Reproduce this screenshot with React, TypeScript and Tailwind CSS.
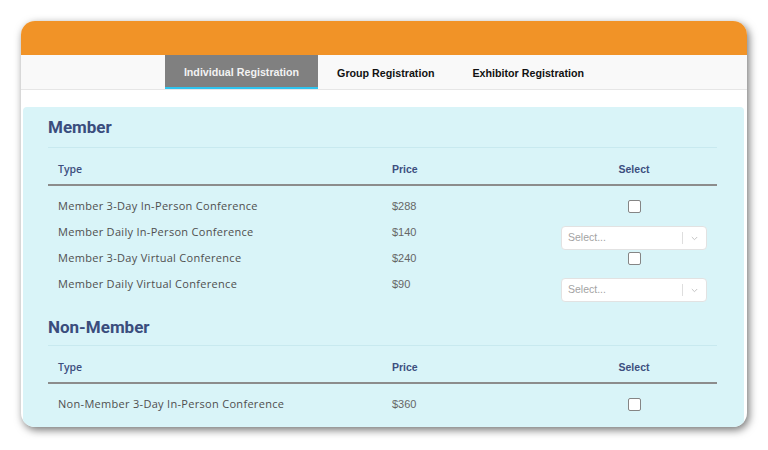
import React from "react"

type Row = { name: string; price: string; kind: "check" | "select" }

const memberRows: Row[] = [
  { name: "Member 3-Day In-Person Conference", price: "$288", kind: "check" },
  { name: "Member Daily In-Person Conference", price: "$140", kind: "select" },
  { name: "Member 3-Day Virtual Conference", price: "$240", kind: "check" },
  { name: "Member Daily Virtual Conference", price: "$90", kind: "select" },
]

const nonMemberRows: Row[] = [
  { name: "Non-Member 3-Day In-Person Conference", price: "$360", kind: "check" },
]

const arial = "font-['Liberation_Sans',Arial,sans-serif]"

function Checkbox() {
  return <span className="block h-[13px] w-[13px] rounded-[2px] border border-[#858585] bg-white" />
}

function SelectBox() {
  return (
    <div className={`mt-[12px] flex h-[24px] w-[146px] items-center rounded-[4px] border border-[#e2e2e2] bg-white ${arial}`}>
      <span className="flex-1 pl-[6px] text-[10.5px] text-[#a3a3a3]">Select...</span>
      <span className="h-[12px] w-px bg-[#dedede]" />
      <span className="flex w-[23px] justify-center">
        <svg width="7" height="5" viewBox="0 0 7 5" fill="none">
          <path d="M0.8 1l2.7 2.7L6.2 1" stroke="#c4c4c4" strokeWidth="1" />
        </svg>
      </span>
    </div>
  )
}

function Section({ title, rows, headPad }: { title: string; rows: Row[]; headPad: string }) {
  return (
    <section>
      <h2 className={`border-b border-[#c8e9ef] ${headPad} font-['Roboto',sans-serif] text-[17px] font-bold leading-[20px] text-[#3a4d7d]`}>
        {title}
      </h2>
      <div className="grid h-[38px] grid-cols-[344px_159px_1fr] items-end border-b-2 border-[#8c8c8c] pb-[8px] leading-[14px] text-[#3d4f7f]">
        <span className="pl-[10px] font-['Open_Sans',sans-serif] text-[10.5px] font-semibold">Type</span>
        <span className={`${arial} text-[10.5px] font-bold`}>Price</span>
        <span className={`${arial} text-center text-[10.5px] font-bold`}>Select</span>
      </div>
      <div className="pt-[7px]">
        {rows.map((r) => (
          <div key={r.name} className="grid h-[26px] grid-cols-[344px_159px_1fr] items-center">
            <span className="pl-[10px] pt-[1px] font-['Open_Sans',sans-serif] text-[11px] tracking-[0.3px] text-[#4f4f4f]">
              {r.name}
            </span>
            <span className={`${arial} pt-[1px] text-[11px] text-[#666]`}>{r.price}</span>
            <span className="flex h-[26px] items-center justify-center">
              {r.kind === "check" ? <Checkbox /> : <SelectBox />}
            </span>
          </div>
        ))}
      </div>
    </section>
  )
}

export default function App() {
  const tabs = ["Individual Registration", "Group Registration", "Exhibitor Registration"]
  return (
    <main className="h-[450px] w-[768px] bg-white pl-[21px] pt-[21px]">
      <div className="flex h-[406px] w-[726px] flex-col overflow-hidden rounded-[14px] bg-white shadow-[2px_3px_8px_rgba(0,0,0,0.55)]">
        <div className="h-[34px] shrink-0 bg-[#f19327]" />
        <nav className="flex h-[35px] shrink-0 justify-center border-b border-[#e6e6e6] bg-[#f9f9f9]">
          {tabs.map((t, i) => (
            <div
              key={t}
              className={`flex items-center px-[19px] pt-[3px] ${arial} text-[10.7px] font-bold ${
                i === 0 ? "border-b-2 border-[#2ec4ef] bg-[#808080] text-[#f2f2f2]" : "text-[#111]"
              }`}
            >
              {t}
            </div>
          ))}
        </nav>
        <div className="mt-[17px] ml-[2px] mr-[3px] flex-1 rounded-t-[4px] bg-[#d9f4f8] pl-[25px] pr-[27px] pt-[10px]">
          <Section title="Member" rows={memberRows} headPad="pb-[10px]" />
          <div className="h-[20px]" />
          <Section title="Non-Member" rows={nonMemberRows} headPad="pb-[8px]" />
        </div>
      </div>
    </main>
  )
}
